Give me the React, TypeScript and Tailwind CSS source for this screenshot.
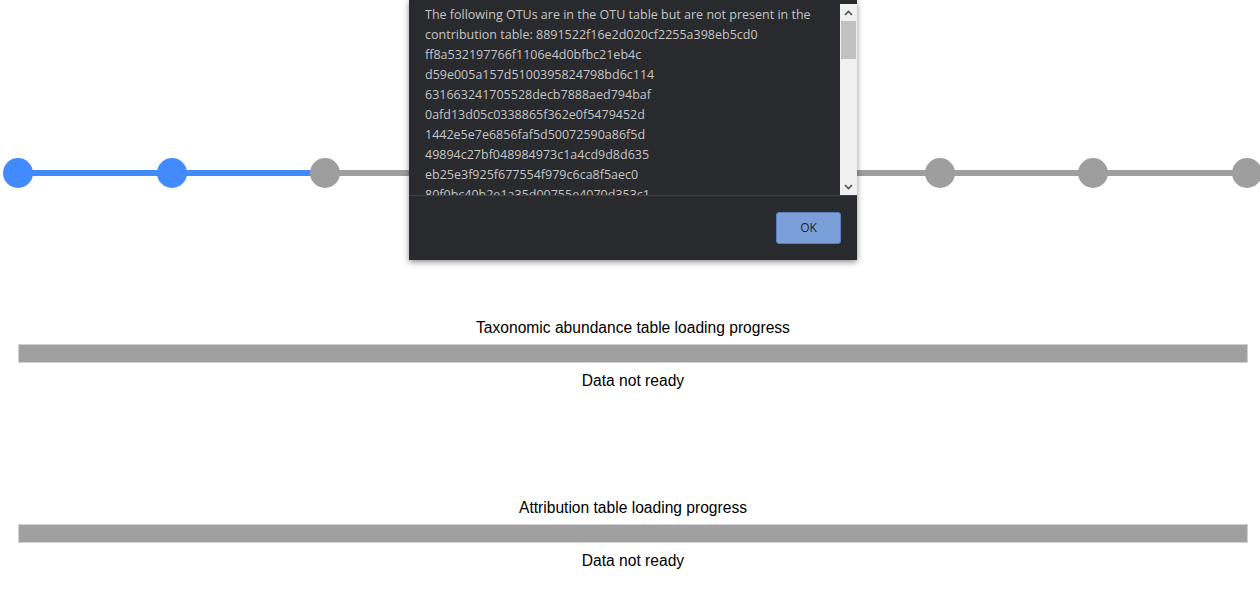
const hashes = [
  '8891522f16e2d020cf2255a398eb5cd0',
  'ff8a532197766f1106e4d0bfbc21eb4c',
  'd59e005a157d5100395824798bd6c114',
  '631663241705528decb7888aed794baf',
  '0afd13d05c0338865f362e0f5479452d',
  '1442e5e7e6856faf5d50072590a86f5d',
  '49894c27bf048984973c1a4cd9d8d635',
  'eb25e3f925f677554f979c6ca8f5aec0',
  '80f0bc40b2e1a35d00755e4070d353c1',
  '3b2f9c1e6d7a48f0b5c2e91d4a6f8037',
];

const steps = 9;
const done = 2;

function Stepper() {
  const items = [];
  for (let i = 0; i < steps; i++) {
    const active = i < done;
    items.push(
      <div
        key={'c' + i}
        className={active ? 'w-[30px] h-[30px] rounded-full shrink-0 bg-[#448aff]' : 'w-[30px] h-[30px] rounded-full shrink-0 bg-[#9e9e9e]'}
      />
    );
    if (i < steps - 1) {
      items.push(
        <div
          key={'l' + i}
          className={i < done ? 'flex-1 h-[6px] -mx-px bg-[#448aff]' : 'flex-1 h-[6px] -mx-px bg-[#9e9e9e]'}
        />
      );
    }
  }
  return <div className="flex items-center ml-[3px] w-[1259px] h-[30px] mt-[158px]">{items}</div>;
}

function Progress({ title }: { title: string }) {
  return (
    <div className="flex flex-col items-center text-[15.6px] leading-[18px] text-black">
      <div>{title}</div>
      <div className="w-full h-[19px] mt-[7px] bg-[#a0a0a0] border border-[#d2d2d2]" />
      <div className="mt-[9px]">Data not ready</div>
    </div>
  );
}

function Dialog() {
  return (
    <div className="absolute left-[409px] top-0 w-[448px] h-[260px] bg-[#292a2e] flex flex-col shadow-[0_2px_6px_rgba(0,0,0,0.45)]">
      {/* message body */}
      <div className="flex mt-[4px] h-[191px]">
        <div
          className="flex-1 overflow-hidden pt-px pl-[16px] pr-[6px] text-[12.5px] leading-[20px] text-[#c4c4c4]"
          style={{ fontFamily: '"Open Sans", "Noto Sans", sans-serif' }}
        >
          The following OTUs are in the OTU table but are not present in the contribution table:{' '}
          {hashes.join(' ')}
        </div>
        <div className="w-[17px] bg-[#f1f1f1] flex flex-col items-center">
          <svg width="9" height="6" viewBox="0 0 9 6" className="mt-[6px]">
            <path d="M1 5 L4.5 1.5 L8 5" stroke="#505050" strokeWidth="1.6" fill="none" />
          </svg>
          <div className="w-[15px] h-[38px] mt-[5px] bg-[#c1c1c1]" />
          <div className="flex-1" />
          <svg width="9" height="6" viewBox="0 0 9 6" className="mb-[5px]">
            <path d="M1 1 L4.5 4.5 L8 1" stroke="#505050" strokeWidth="1.6" fill="none" />
          </svg>
        </div>
      </div>
      {/* footer */}
      <div className="flex-1 border-t border-[#404146] flex justify-end items-start pt-[16px] pr-[16px]">
        <button
          className="w-[65px] h-[32px] rounded-[3px] bg-[#7b9fd9] border border-[#5d7fbf] text-[12px] text-[#1c1f2a]"
          style={{ fontFamily: '"Open Sans", "Noto Sans", sans-serif' }}
        >
          OK
        </button>
      </div>
    </div>
  );
}

export default function App() {
  return (
    <div
      className="relative w-[1260px] h-[611px] overflow-hidden bg-white"
      style={{ fontFamily: '"Liberation Sans", Arial, sans-serif' }}
    >
      <Stepper />
      <div className="ml-[18px] w-[1230px] mt-[131px]">
        <Progress title="Taxonomic abundance table loading progress" />
        <div className="h-[109px]" />
        <Progress title="Attribution table loading progress" />
      </div>
      <Dialog />
    </div>
  );
}
